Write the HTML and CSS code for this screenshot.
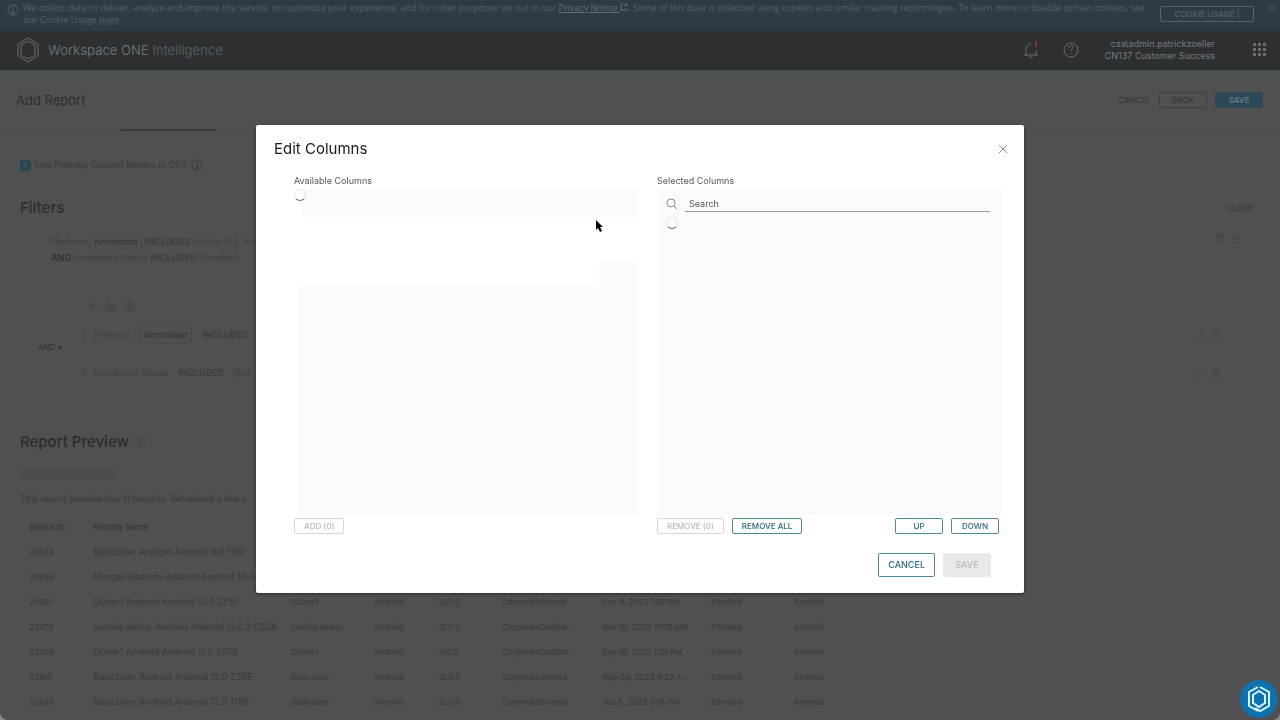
FILE: index.html
```html
<!DOCTYPE html>
<html lang="en">
<head>
    <meta charset="UTF-8">
    <meta name="viewport" content="width=device-width, initial-scale=1.0">
    <title>Workspace ONE Intelligence</title>
    <link rel="stylesheet" href="styles.css">
</head>
<body>
    <div class="page">
        <div class="cookie-banner">
            <svg class="icon" width="12" height="12" viewBox="0 0 12 12"><circle cx="6" cy="6" r="5"/><path d="M5 5h1v4M4 9h4M6 3v1"/></svg>
            <p>We collect data to deliver, analyze and improve the service, to customize your experience, and for other purposes set out in our <a href="#">Privacy Notice <svg class="icon" width="8" height="8" viewBox="0 0 8 8"><path d="M3 1H1v6h6V5M5 1h2v2M7 1L4 4"/></svg></a>. Some of this data is collected using cookies and similar tracking technologies. To learn more or disable certain cookies, see our Cookie Usage page.</p>
            <button class="btn banner-button">COOKIE USAGE <span>|</span></button>
            <button class="icon-button" aria-label="Dismiss"><svg class="icon" width="8" height="8" viewBox="0 0 8 8"><path d="M1 1l6 6M7 1L1 7"/></svg></button>
        </div>

        <header class="header">
            <svg class="icon" width="24" height="26" viewBox="0 0 24 26"><path d="M12 1l10 6v12l-10 6-10-6V7zM12 4l7 4v10l-7 4-7-4V8z"/></svg>
            <span class="brand">Workspace ONE <span>Intelligence</span></span>
            <button class="icon-button bell" aria-label="Notifications"><svg class="icon" width="16" height="18" viewBox="0 0 16 18"><path d="M3 14V8c0-3 2-5 5-5M13 9v5M1 14h14M6 16h4"/><path class="alert" d="M13 0v6"/></svg></button>
            <button class="icon-button help" aria-label="Help"><svg class="icon" width="16" height="16" viewBox="0 0 16 16"><circle cx="8" cy="8" r="7"/><path d="M6 6c0-3 4-3 4-1 0 2-2 2-2 4M8 11v1"/></svg></button>
            <div class="user">
                <div>csa\admin.patrickzoeller</div>
                <div>CN137 Customer Success</div>
            </div>
            <button class="icon-button" aria-label="Apps"><svg class="dots" width="14" height="14" viewBox="0 0 14 14"><path d="M0 0h3v3H0zM5 0h3v3H5zM10 0h3v3h-3zM0 5h3v3H0zM5 5h3v3H5zM10 5h3v3h-3zM0 10h3v3H0zM5 10h3v3H5zM10 10h3v3h-3z"/></svg></button>
        </header>

        <div class="title-bar">
            <h1>Add Report</h1>
            <button class="btn link">CANCEL</button>
            <button class="btn">BACK</button>
            <button class="btn primary">SAVE</button>
        </div>
        <div class="tab-line"><span></span></div>

        <main class="content">
            <div class="friendly">
                <input type="checkbox" id="friendly" checked>
                <label for="friendly">Use Friendly Column Names in CSV</label>
                <svg class="icon" width="12" height="12" viewBox="0 0 12 12"><circle cx="6" cy="6" r="5"/><path d="M5 5h1v4M4 9h4M6 3v1"/></svg>
            </div>

            <div class="section-head">
                <h2>Filters</h2>
                <button class="btn link">CLOSE</button>
            </div>
            <div class="filter-summary">
                <div>
                    <p>Platform <span class="tag">Normalized</span> <b>INCLUDES</b> (Apple iOS, And</p>
                    <p><b class="dark">AND</b> Enrollment Status <b>INCLUDES</b> (Enrolled)</p>
                </div>
                <div class="actions">
                    <svg class="icon" width="10" height="10" viewBox="0 0 10 10"><path d="M2 1h6v8H2zM2 3h6"/></svg>
                    <svg class="icon" width="10" height="10" viewBox="0 0 10 10"><path d="M1 2h8M1 5h8M2 8h6"/></svg>
                </div>
            </div>
            <div class="rules">
                <button class="join">AND ▾</button>
                <div class="rule-list">
                    <div class="tools">
                        <svg class="icon" width="10" height="10" viewBox="0 0 10 10"><path d="M5 1v8M1 5h8"/></svg>
                        <svg class="icon" width="10" height="10" viewBox="0 0 10 10"><path d="M1 1v8h8V3M4 1v4h4M3 7h4"/></svg>
                        <svg class="icon" width="10" height="10" viewBox="0 0 10 10"><path d="M2 2h7v7H2zM4 4h3M4 7h3"/></svg>
                    </div>
                    <div class="rule">
                        <span class="grip">⠿</span><span>Platform</span><span class="tag">Normalized</span><b>INCLUDES</b>
                        <div class="actions">
                            <svg class="icon" width="10" height="10" viewBox="0 0 10 10"><path d="M1 8h3l5-6"/></svg>
                            <svg class="icon" width="10" height="10" viewBox="0 0 10 10"><path d="M2 2h6M3 4h4v4H3z"/></svg>
                        </div>
                    </div>
                    <div class="rule">
                        <span class="grip">⠿</span><span>Enrollment Status</span><b>INCLUDES</b><span>(Enr</span>
                        <div class="actions">
                            <svg class="icon" width="10" height="10" viewBox="0 0 10 10"><path d="M1 8h3l5-6"/></svg>
                            <svg class="icon" width="10" height="10" viewBox="0 0 10 10"><path d="M2 2h6M3 4h4v4H3z"/></svg>
                        </div>
                    </div>
                </div>
            </div>

            <div class="section-head preview-head">
                <h2>Report Preview</h2>
                <svg class="icon faint" width="12" height="12" viewBox="0 0 12 12"><circle cx="6" cy="6" r="5"/><path d="M5 5h1v4M4 9h4M6 3v1"/></svg>
            </div>
            <div class="preview-action"></div>
            <p class="preview-note">This report preview has 11 records. Refreshed a few s</p>

            <table class="preview">
                <colgroup>
                    <col class="c-id"><col class="c-name"><col class="c-user"><col class="c-os"><col class="c-os"><col class="c-owner"><col class="c-date"><col class="c-user"><col>
                </colgroup>
                <thead>
                    <tr><th>Device ID</th><th>Friendly Name</th><td colspan="7"></td></tr>
                </thead>
                <tbody>
                    <tr><td>23424</td><td class="name">BasicUser Android Android 9.0 11X0</td><td colspan="7"></td></tr>
                    <tr><td>23838</td><td class="name">Morgan Abazidu Android Android 10.0</td><td colspan="7"></td></tr>
                    <tr><td>23601</td><td class="name">DUser1 Android Android 13.0 ZE51</td><td>DUser1</td><td>Android</td><td>13.0.0</td><td>CorporateShared</td><td>Sep 4, 2023 1:07 PM</td><td>Enrolled</td><td>Android</td></tr>
                    <tr><td>22478</td><td class="name">camille.debay Android Android 13.0.0 02DA</td><td>camille.debay</td><td>Android</td><td>13.0.0</td><td>CorporateDedicat...</td><td>Mar 10, 2023 11:05 AM</td><td>Enrolled</td><td>Android</td></tr>
                    <tr><td>23704</td><td class="name">DUser1 Android Android 11.0 25P8</td><td>DUser1</td><td>Android</td><td>11.0.0</td><td>CorporateDedicat...</td><td>Sep 19, 2023 1:31 PM</td><td>Enrolled</td><td>Android</td></tr>
                    <tr><td>23189</td><td class="name">BasicUser Android Android 12.0 Z2RE</td><td>BasicUser</td><td>Android</td><td>12.0.0</td><td>CorporateShared</td><td>May 30, 2023 9:32 A...</td><td>Enrolled</td><td>Android</td></tr>
                    <tr><td>23428</td><td class="name">BasicUser Android Android 12.0 11X0</td><td>BasicUser</td><td>Android</td><td>12.0.0</td><td>CorporateShared</td><td>Jun 5, 2023 3:18 PM</td><td>Enrolled</td><td>Android</td></tr>
                </tbody>
            </table>
        </main>
    </div>

    <div class="backdrop">
        <div class="modal" role="dialog" aria-labelledby="modalTitle">
            <div class="modal-header">
                <h3 id="modalTitle">Edit Columns</h3>
                <button class="icon-button" aria-label="Close"><svg class="icon" width="10" height="10" viewBox="0 0 10 10"><path d="M1 1l8 8M9 1L1 9"/></svg></button>
            </div>
            <div class="modal-body">
                <section class="picker">
                    <h4>Available Columns</h4>
                    <div class="panel available">
                        <div class="panel-top"><span class="spinner"></span></div>
                        <div class="panel-notch"></div>
                        <div class="panel-list"></div>
                    </div>
                    <div class="picker-buttons">
                        <button class="btn" disabled>ADD (0)</button>
                    </div>
                </section>
                <section class="picker">
                    <h4>Selected Columns</h4>
                    <div class="panel selected">
                        <div class="search">
                            <svg class="icon" width="12" height="12" viewBox="0 0 12 12"><circle cx="5" cy="5" r="4"/><path d="M8 8l3 3"/></svg>
                            <input type="text" placeholder="Search" aria-label="Search selected columns">
                        </div>
                        <span class="spinner"></span>
                    </div>
                    <div class="picker-buttons">
                        <button class="btn" disabled>REMOVE (0)</button>
                        <button class="btn">REMOVE ALL</button>
                        <button class="btn push">UP</button>
                        <button class="btn">DOWN</button>
                    </div>
                </section>
            </div>
            <div class="modal-footer">
                <button class="btn large">CANCEL</button>
                <button class="btn large filled" disabled>SAVE</button>
            </div>
        </div>
    </div>

    <button class="fab" aria-label="Assistant"><svg class="icon" width="26" height="28" viewBox="0 0 26 28"><path d="M12 2L3 7v14l9 5M14 2l9 5v14l-9 5-5-3M13 6l-6 4v8l6 4 6-4v-8z"/></svg></button>
    <svg class="pointer" width="10" height="14" viewBox="0 0 10 14"><path d="M1 1v10l2-2 2 4 2-1-2-4h3z"/></svg>
</body>
</html>
```

FILE: styles.css
```css
* {
    box-sizing: border-box;
}
body {
    margin: 0;
    background: #8a8a8a;
    color: #393939;
    font-family: Inter, "Open Sans", sans-serif;
    font-size: 9px;
    line-height: 12px;
    overflow: hidden;
}
h1, h2, h3, h4, p {
    margin: 0;
    font-weight: normal;
}
button {
    font: inherit;
    color: inherit;
    cursor: pointer;
}
.page {
    height: 100vh;
    overflow: hidden;
    background: #505050;
    border-radius: 0 0 8px 8px;
}
.icon {
    display: block;
    flex: none;
    fill: none;
    stroke: currentColor;
}
.icon-button {
    padding: 0;
    border: none;
    background: none;
}
.btn {
    height: 16px;
    min-width: 48px;
    padding: 0 9px;
    border: 1px solid #3e3e3e;
    border-radius: 2px;
    background: none;
    font-size: 8px;
    font-weight: 500;
    line-height: 12px;
    white-space: nowrap;
}

/* cookie banner and header */
.cookie-banner {
    display: flex;
    gap: 4px;
    height: 31px;
    padding: 2px 4px 0 7px;
    background: #2d3c43;
    color: #53646b;
}
.cookie-banner > .icon {
    margin-top: 2px;
}
.cookie-banner p {
    flex: 1;
    font-family: "Open Sans", sans-serif;
}
.cookie-banner a {
    color: #5d7077;
}
.cookie-banner a .icon {
    display: inline;
}
.banner-button {
    margin: 4px 10px 0;
    width: 94px;
    border-color: #53646b;
}
.cookie-banner .icon-button {
    height: 12px;
}
.header {
    display: flex;
    align-items: center;
    height: 39px;
    padding: 0 13px 2px 16px;
    background: #2c3033;
    color: #696d70;
}
.brand {
    margin: 0 auto 0 8px;
    font-size: 13px;
    line-height: 16px;
}
.brand span {
    color: #54595c;
}
.alert {
    stroke: #8a3030;
    stroke-width: 2;
}
.bell {
    margin-right: 24px;
}
.help {
    margin-right: 26px;
}
.user {
    margin-right: 38px;
    text-align: right;
    color: #777b7e;
}
.dots {
    display: block;
    fill: #696d70;
}

/* report page */
.title-bar {
    display: flex;
    align-items: center;
    gap: 8px;
    height: 59px;
    padding: 0 17px 0 16px;
    background: linear-gradient(#4b5254, #505050 20px);
}
.title-bar h1 {
    margin-right: auto;
    color: #2c2c2c;
    font-size: 13px;
    line-height: 16px;
}
.btn.link {
    min-width: 0;
    padding: 0;
    border: none;
}
.btn.primary {
    border-color: #2c4756;
    background: #2c4756;
    color: #6f848f;
}
.tab-line {
    height: 2px;
    border-bottom: 1px solid #4c4c4c;
}
.tab-line span {
    display: block;
    width: 95px;
    height: 2px;
    margin-left: 121px;
    background: #393939;
}
.content {
    padding: 27px 27px 0 20px;
}
.friendly {
    display: flex;
    align-items: center;
    gap: 4px;
    height: 14px;
}
.friendly input {
    appearance: none;
    width: 11px;
    height: 11px;
    margin: 0;
    border-radius: 2px;
    background: #294550;
}
.friendly input:checked::before {
    content: "✓";
    display: block;
    color: #66777e;
    font-size: 8px;
    line-height: 11px;
    text-align: center;
}
.section-head {
    display: flex;
    align-items: center;
    justify-content: space-between;
    height: 20px;
    margin-top: 26px;
}
h2 {
    color: #2c2c2c;
    font-size: 15px;
    font-weight: 500;
    line-height: 20px;
}
.filter-summary {
    display: flex;
    justify-content: space-between;
    height: 57px;
    margin-top: 16px;
    padding: 0 12px 0 31px;
    color: #414141;
}
.filter-summary p {
    line-height: 16px;
}
b {
    color: #3d3d3d;
    font-weight: 600;
}
.dark {
    color: #303030;
}
.tag {
    padding: 1px 4px;
    border: 1px solid #484848;
    border-radius: 2px;
    color: #303030;
    font-size: 8px;
}
.actions {
    display: flex;
    gap: 6px;
    color: #424242;
}
.rules {
    display: flex;
    align-items: center;
    height: 111px;
    margin-left: 18px;
    color: #414141;
}
.join {
    padding: 0;
    border: none;
    background: none;
    color: #333333;
    font-size: 8px;
}
.rule-list {
    flex: 1;
    margin-left: 18px;
    padding-right: 32px;
}
.tools {
    display: flex;
    gap: 8px;
    height: 15px;
    padding-left: 8px;
}
.rule {
    display: flex;
    align-items: center;
    gap: 10px;
    height: 38px;
}
.rule .actions {
    margin-left: auto;
}
.grip {
    width: 4px;
}
.preview-head {
    justify-content: flex-start;
    gap: 6px;
    margin-top: 30px;
}
.faint {
    color: #454545;
}
.preview-action {
    width: 96px;
    height: 12px;
    margin-top: 16px;
    background: #4c4c4c;
}
.preview-note {
    margin-top: 13px;
}
.preview {
    width: 100%;
    margin-top: 9px;
    border-collapse: collapse;
    table-layout: fixed;
    font-size: 8px;
}
.preview th, .preview td {
    height: 25px;
    padding: 0 0 0 9px;
    text-align: left;
    font-weight: normal;
    white-space: nowrap;
}
.preview th {
    color: #303030;
}
.preview .name {
    font-size: 9px;
}
.c-id { width: 64px; }
.c-name { width: 198px; }
.c-user { width: 83px; }
.c-os { width: 64px; }
.c-owner { width: 100px; }
.c-date { width: 109px; }

/* edit columns dialog */
.backdrop {
    position: fixed;
    inset: 0;
    display: flex;
    align-items: center;
    justify-content: center;
    padding-bottom: 2px;
}
.modal {
    display: flex;
    flex-direction: column;
    width: 60%;
    height: 65vh;
    padding: 12px 16px 16px 18px;
    background: #ffffff;
    border-radius: 2px;
    box-shadow: 0 1px 3px #2c2c2c;
    color: #565656;
}
.modal-header {
    display: flex;
    align-items: center;
    justify-content: space-between;
    height: 24px;
}
.modal-header h3 {
    color: #1b1b1b;
    font-size: 15px;
    line-height: 24px;
}
.modal-header .icon-button {
    color: #8c8c8c;
}
.modal-body {
    display: flex;
    flex: 1;
    gap: 18px;
    padding: 12px 6px 0 20px;
}
.picker {
    display: flex;
    flex: 1;
    flex-direction: column;
}
.picker h4 {
    line-height: 16px;
}
.panel {
    display: flex;
    flex: 1;
    flex-direction: column;
}
.panel-top {
    height: 28px;
    background: linear-gradient(90deg, #ffffff 8px, #fafafa 8px);
}
.panel-notch {
    align-self: flex-end;
    width: 40px;
    height: 24px;
    margin-top: 45px;
    background: #fafafa;
}
.panel-list {
    flex: 1;
    margin-left: 4px;
    background: #fafafa;
}
.selected {
    padding: 6px 12px 0 9px;
    background: #fafafa;
}
.search {
    display: flex;
    align-items: center;
    gap: 7px;
    height: 17px;
    color: #8c8c8c;
}
.search input {
    flex: 1;
    height: 17px;
    padding: 0 4px;
    border: none;
    border-bottom: 1px solid #9a9a9a;
    outline: none;
    background: none;
    font: inherit;
}
.search input::placeholder {
    color: #565656;
    opacity: 1;
}
.spinner {
    display: block;
    width: 12px;
    height: 12px;
    border: 1px solid #dfe5e7;
    border-bottom-color: #6d7b80;
    border-radius: 50%;
}
.selected .spinner {
    margin-top: 5px;
}
.picker-buttons {
    display: flex;
    gap: 8px;
    margin-top: 3px;
    padding-right: 3px;
}
.modal .btn {
    border-color: #4d8a9d;
    color: #26687d;
}
.modal .btn:disabled {
    border-color: #d8d8d8;
    color: #b8b8b8;
    cursor: default;
}
.picker-buttons .push {
    margin-left: auto;
}
.modal-footer {
    display: flex;
    justify-content: flex-end;
    gap: 8px;
    padding: 19px 17px 0 0;
}
.modal .btn.large {
    height: 24px;
    font-size: 9px;
}
.modal .btn.filled {
    border-color: #e9e9e9;
    background: #e9e9e9;
}

.fab {
    position: fixed;
    right: 2px;
    bottom: 2px;
    display: flex;
    align-items: center;
    justify-content: center;
    width: 38px;
    height: 38px;
    padding: 0;
    border: none;
    border-radius: 50%;
    background: #0f72ae;
    color: #d9f4ff;
}
.fab .icon {
    stroke-width: 2;
}
.pointer {
    position: fixed;
    top: 219px;
    left: 595px;
    fill: #000000;
    stroke: #ffffff;
    stroke-width: 1;
    paint-order: stroke;
}
```
